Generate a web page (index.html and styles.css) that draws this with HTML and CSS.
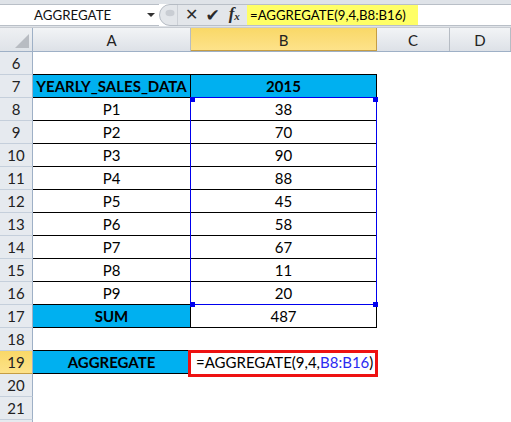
FILE: index.html
```html
<!DOCTYPE html>
<html>
<head>
<meta charset="utf-8">
<link rel="stylesheet" href="styles.css">
</head>
<body>
<div class="app">
  <div class="topbar">
    <div class="fbar">
      <div class="namebox"><span class="nbtext">AGGREGATE</span><span class="drop"></span></div>
      <div class="fxgroup">
        <svg class="knob" width="19" height="22" viewBox="0 0 19 22"><path d="M11 0.5 H19 V21.5 H11 A10.5 10.5 0 0 1 11 0.5 Z" fill="#e3e6ea" stroke="#b5bbc3"/><ellipse cx="11" cy="9" rx="4.5" ry="3.2" fill="#c9cdd3"/></svg>
        <span class="ico x">✕</span>
        <span class="ico ck">✔</span>
        <span class="ico fx">f<sub>x</sub></span>
      </div>
      <div class="formula">=AGGREGATE(9,4,B8:B16)</div>
    </div>
  </div>
  <div class="colhead">
    <div class="corner"><span class="tri"></span></div>
    <div class="ch ca">A</div>
    <div class="ch cb sel">B</div>
    <div class="ch cc">C</div>
    <div class="ch cd">D</div>
  </div>
  <div class="sheet">
    <div class="row"><div class="rh">6</div><div class="c ca tb"></div><div class="c cb tb"></div><div class="c cc"></div><div class="c cd"></div></div>
    <div class="row"><div class="rh">7</div><div class="c ca t hd">YEARLY_SALES_DATA</div><div class="c cb t hd">2015</div><div class="c cc"></div><div class="c cd"></div></div>
    <div class="row"><div class="rh">8</div><div class="c ca t">P1</div><div class="c cb t">38</div><div class="c cc"></div><div class="c cd"></div></div>
    <div class="row"><div class="rh">9</div><div class="c ca t">P2</div><div class="c cb t">70</div><div class="c cc"></div><div class="c cd"></div></div>
    <div class="row"><div class="rh">10</div><div class="c ca t">P3</div><div class="c cb t">90</div><div class="c cc"></div><div class="c cd"></div></div>
    <div class="row"><div class="rh">11</div><div class="c ca t">P4</div><div class="c cb t">88</div><div class="c cc"></div><div class="c cd"></div></div>
    <div class="row"><div class="rh">12</div><div class="c ca t">P5</div><div class="c cb t">45</div><div class="c cc"></div><div class="c cd"></div></div>
    <div class="row"><div class="rh">13</div><div class="c ca t">P6</div><div class="c cb t">58</div><div class="c cc"></div><div class="c cd"></div></div>
    <div class="row"><div class="rh">14</div><div class="c ca t">P7</div><div class="c cb t">67</div><div class="c cc"></div><div class="c cd"></div></div>
    <div class="row"><div class="rh">15</div><div class="c ca t">P8</div><div class="c cb t">11</div><div class="c cc"></div><div class="c cd"></div></div>
    <div class="row"><div class="rh">16</div><div class="c ca t">P9</div><div class="c cb t">20</div><div class="c cc"></div><div class="c cd"></div></div>
    <div class="row"><div class="rh">17</div><div class="c ca t hd">SUM</div><div class="c cb t">487</div><div class="c cc"></div><div class="c cd"></div></div>
    <div class="row"><div class="rh">18</div><div class="c ca tb"></div><div class="c cb"></div><div class="c cc"></div><div class="c cd"></div></div>
    <div class="row"><div class="rh hl">19</div><div class="c ca t hd">AGGREGATE</div><div class="c cb fcell">=AGGREGATE(9,4,<span class="ref">B8:B16</span>)<span class="caret"></span></div><div class="c cc"></div><div class="c cd"></div></div>
    <div class="row"><div class="rh">20</div><div class="c ca"></div><div class="c cb"></div><div class="c cc"></div><div class="c cd"></div></div>
    <div class="row"><div class="rh">21</div><div class="c ca"></div><div class="c cb"></div><div class="c cc"></div><div class="c cd"></div></div>
    <div class="row"><div class="rh"></div><div class="c ca"></div><div class="c cb"></div><div class="c cc"></div><div class="c cd"></div></div>

    <div class="selbox">
      <span class="hnd h1"></span><span class="hnd h2"></span><span class="hnd h3"></span><span class="hnd h4"></span>
    </div>
    <div class="redbox"></div>
  </div>
</div>
</body>
</html>
```
FILE: styles.css
```css
html, body {
  margin: 0;
  padding: 0;
  background: #fff;
}
.app {
  width: 511px;
  height: 422px;
  overflow: hidden;
  font-family: Lato, "Liberation Sans", sans-serif;
  font-size: 15px;
  color: #000;
}
.topbar {
  height: 28px;
  box-sizing: border-box;
  padding-top: 4px;
  background: #dfe3e8;
  border-bottom: 1px solid #c8ccd2;
}
.fbar {
  height: 20px;
  display: flex;
  background: #fff;
  border-top: 1px solid #b9bfc7;
  border-bottom: 1px solid #b9bfc7;
  box-sizing: content-box;
}
.namebox {
  width: 159px;
  position: relative;
  display: flex;
  align-items: center;
  font-size: 13.3px;
}
.nbtext {
  padding-left: 34px;
  color: #111;
}
.drop {
  position: absolute;
  left: 147px;
  top: 8px;
  width: 0;
  height: 0;
  border-left: 4px solid transparent;
  border-right: 4px solid transparent;
  border-top: 4px solid #333;
}
.fxgroup {
  width: 88px;
  display: flex;
  align-items: center;
  background: #e3e6ea;
  position: relative;
}
.knob {
  display: block;
  margin-top: -1px;
  margin-bottom: -1px;
  margin-right: 7px;
  background: #fff;
}
.ico {
  color: #2b2b2b;
  line-height: 20px;
}
.x {
  font-family: "DejaVu Sans", sans-serif;
  font-size: 16px;
  font-weight: bold;
  margin-right: 7px;
}
.ck {
  font-family: "DejaVu Sans", sans-serif;
  font-size: 17px;
  margin-right: 9px;
}
.fx {
  font-family: "Liberation Serif", serif;
  font-style: italic;
  font-weight: bold;
  font-size: 17px;
  color: #2b2b2b;
}
.fx sub {
  font-size: 11px;
  vertical-align: -1px;
}
.formula {
  width: 171px;
  background: #ffff66;
  font-size: 13.2px;
  line-height: 20px;
  padding-left: 3px;
  box-sizing: border-box;
  white-space: nowrap;
}
.colhead {
  height: 24px;
  display: flex;
  box-sizing: border-box;
  border-bottom: 1px solid #9eb0c6;
}
.corner {
  width: 33px;
  box-sizing: border-box;
  border-right: 1px solid #9eb0c6;
  background: linear-gradient(#eef0f3, #dfe3e8);
  position: relative;
}
.tri {
  position: absolute;
  right: 3px;
  bottom: 3px;
  width: 0;
  height: 0;
  border-left: 14px solid transparent;
  border-bottom: 14px solid #b8bcc2;
}
.ch {
  box-sizing: border-box;
  border-right: 1px solid #b6bcc4;
  background: linear-gradient(#f2f4f6, #dde1e7);
  text-align: center;
  line-height: 24px;
  color: #222;
  font-size: 15px;
}
.ch.sel {
  background: linear-gradient(#f9d867, #fde28a);
  border-right: 1px solid #c59d44;
  border-bottom: 1px solid #c59d44;
}
.ca { width: 158px; }
.cb { width: 186px; }
.cc { width: 73px; }
.cd { flex: 1; }
.sheet {
  position: relative;
}
.row {
  height: 23px;
  display: flex;
}
.rh {
  width: 33px;
  box-sizing: border-box;
  border-right: 1px solid #9eb0c6;
  border-bottom: 1px solid #c5cfdb;
  background: #e6eaef;
  text-align: center;
  line-height: 23px;
  color: #222;
  font-size: 15px;
}
.rh.hl {
  background: linear-gradient(#f9d867, #fde28a);
  border-bottom: 1px solid #c59d44;
}
.c {
  box-sizing: border-box;
  height: 23px;
  line-height: 23px;
  text-align: center;
  white-space: nowrap;
}
.tb {
  border-bottom: 1px solid #000;
}
.t {
  border-bottom: 1px solid #000;
  border-right: 1px solid #000;
}
.hd {
  background: #00b0f0;
  font-weight: bold;
}
.fcell {
  text-align: left;
  padding-left: 5px;
  position: relative;
}
.ref {
  color: #2a2af0;
}
.caret {
  display: inline-block;
  width: 1px;
  height: 17px;
  background: #000;
  vertical-align: -3px;
  margin-left: 2px;
}
.selbox {
  position: absolute;
  left: 190px;
  top: 45px;
  width: 187px;
  height: 208px;
  box-sizing: border-box;
  border: 1px solid #0000ee;
  pointer-events: none;
}
.hnd {
  position: absolute;
  width: 5px;
  height: 5px;
  background: #0000ee;
}
.h1 { left: -1px; top: -1px; }
.h2 { right: -2px; top: -1px; }
.h3 { left: -1px; bottom: -3px; }
.h4 { right: -2px; bottom: -3px; }
.redbox {
  position: absolute;
  left: 188px;
  top: 298px;
  width: 190px;
  height: 27px;
  box-sizing: border-box;
  border: 3px solid #ee1111;
}
```
